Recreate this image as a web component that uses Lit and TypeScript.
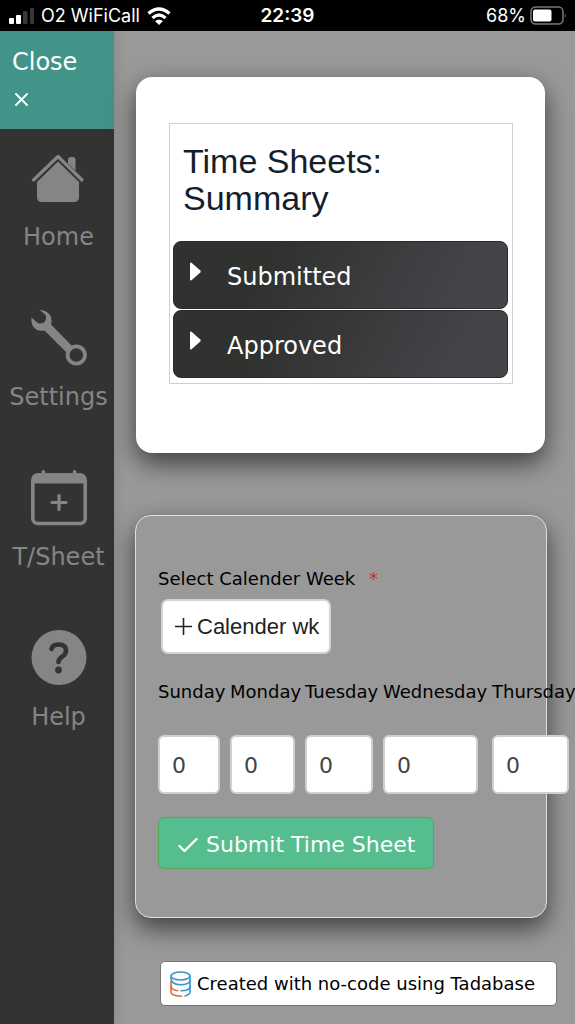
import { LitElement, html, css, svg } from "lit";
import { customElement, state } from "lit/decorators.js";
import { classMap } from "lit/directives/class-map.js";

const homeIcon = svg`
  <path d="M27 11.500 L48 32 V47 Q48 52 43 52 H11 Q6 52 6 47 V32 Z" />
  <path d="M2.500 30 L27 6.500 L51 30" fill="none" stroke="currentColor" stroke-width="3.200" stroke-linecap="round" stroke-linejoin="round" />
  <path d="M37 13.500 V10 Q37 7 40 7 H42 Q44.500 7 44.500 10 V20.500 Z" />
`;

const wrenchIcon = svg`
  <path d="M8.500 0 Q17 0 20 7 Q21.300 11 20 14.500 L41 36 L35 42 L13.500 20.500 Q9 21.500 5 19.500 Q-0.500 15.500 0.500 7.500 L6 12.500 Q8 14 11.500 13 Q14.500 12 15 9 Q15.500 5.500 13 3.500 Z" />
  <circle cx="45.300" cy="45" r="8.700" fill="#333" stroke="currentColor" stroke-width="3.800" />
`;

const calendarIcon = svg`
  <rect x="1.800" y="5" width="52.400" height="48.500" rx="5" fill="none" stroke="currentColor" stroke-width="3.600" />
  <path d="M1 13.500 V9 Q1 3.500 7 3.500 H49 Q55 3.500 55 9 V13.500 Z" />
  <path d="M12.400 1.800 V6 M43.600 1.800 V6" stroke="currentColor" stroke-width="3.600" stroke-linecap="round" />
  <path d="M28 25.500 V39.500 M21 32.500 H35" stroke="currentColor" stroke-width="3.200" stroke-linecap="round" />
`;

const helpIcon = svg`
  <circle cx="28" cy="27.500" r="27.500" />
  <path d="M20.500 19 Q21.500 14.500 27.500 14.500 Q35 14.500 35 20.500 Q35 24 31.500 26.500 Q27.500 29 27.500 32" fill="none" stroke="#333" stroke-width="4.600" stroke-linecap="round" />
  <circle cx="27.500" cy="40" r="3.400" fill="#333" />
`;

const links = [
  { label: "Home", icon: homeIcon },
  { label: "Settings", icon: wrenchIcon },
  { label: "T/Sheet", icon: calendarIcon },
  { label: "Help", icon: helpIcon },
];

@customElement("status-bar")
class StatusBar extends LitElement {
  static styles = css`
    :host {
      display: grid;
      grid-template-columns: 1fr auto 1fr;
      align-items: center;
      height: 31px;
      padding: 0 8px;
      background: #000;
      color: #fff;
      font: 18px/30px Inter, sans-serif;
    }
    .left,
    .right {
      display: flex;
      align-items: center;
      gap: 7px;
    }
    .right {
      justify-content: flex-end;
      gap: 4px;
    }
    .time {
      font-weight: 600;
      font-size: 19px;
    }
    svg {
      display: block;
    }
  `;

  render() {
    return html`
      <div class="left">
        <svg width="26" height="18" viewBox="0 0 26 18" fill="#fff" aria-hidden="true">
          <rect x="1" y="11" width="5" height="6" rx="1" />
          <rect x="8" y="8" width="5" height="9" rx="1" />
          <rect x="15" y="4" width="4.500" height="13" rx="1" fill="#383838" />
          <rect x="22" y="1" width="4" height="16" rx="1" fill="#383838" />
        </svg>
        <span>O2 WiFiCall</span>
        <svg width="24" height="18" viewBox="0 0 24 18" fill="none" stroke="#fff" stroke-width="3.400" aria-hidden="true">
          <path d="M1.500 6.500 Q12 -2.500 22.500 6.500" />
          <path d="M5.500 11 Q12 5 18.500 11" />
          <path d="M12 18 L8 14 Q12 11 16 14 Z" fill="#fff" stroke="none" />
        </svg>
      </div>
      <span class="time">22:39</span>
      <div class="right">
        <span>68%</span>
        <svg width="37" height="19" viewBox="0 0 37 19" aria-hidden="true">
          <rect x="1" y="1" width="32" height="17" rx="4.500" fill="none" stroke="#777" stroke-width="1.500" />
          <rect x="3" y="3.500" width="18.500" height="12" rx="2" fill="#fff" />
          <path d="M34.800 7 Q36.500 9.500 34.800 12 Z" fill="#777" />
        </svg>
      </div>
    `;
  }
}

@customElement("side-menu")
class SideMenu extends LitElement {
  static styles = css`
    :host {
      display: block;
      background: #333;
      color: #858585;
      box-shadow: 0 0 12px rgba(0, 0, 0, 0.15);
      font: 24px/32px Verdana, "DejaVu Sans", sans-serif;
    }
    .close {
      display: flex;
      flex-direction: column;
      gap: 15px;
      width: 100%;
      height: 98px;
      padding: 15px 12px;
      border: 0;
      background: #429488;
      color: #fff;
      font: inherit;
      text-align: left;
      cursor: pointer;
    }
    .cross {
      display: block;
      margin-left: 3px;
    }
    .item {
      display: flex;
      flex-direction: column;
      align-items: center;
      gap: 15px;
      padding: 21px 0 36px;
      color: inherit;
      text-decoration: none;
      white-space: nowrap;
    }
    .item-label,
    .icon {
      display: block;
      margin-left: 3px;
    }
    .icon {
      overflow: visible;
    }
  `;

  render() {
    return html`
      <button class="close" type="button">
        <span>Close</span>
        <svg class="cross" width="13" height="13" viewBox="0 0 13 13" fill="none" stroke="#fff" stroke-width="1.900" stroke-linecap="round" aria-hidden="true">
          <path d="M1 1 L12 12 M12 1 L1 12" />
        </svg>
      </button>
      <nav>
        ${links.map(
          (link) => html`
            <a class="item" href="#">
              <svg class="icon" width="56" height="56" viewBox="0 0 56 56" fill="currentColor" aria-hidden="true">${link.icon}</svg>
              <span class="item-label">${link.label}</span>
            </a>
          `
        )}
      </nav>
    `;
  }
}

@customElement("summary-card")
class SummaryCard extends LitElement {
  static styles = css`
    :host {
      display: block;
      padding: 46px 32px 69px 33px;
      border-radius: 16px;
      background: #fff;
      box-shadow: 0 10px 26px rgba(0, 0, 0, 0.6);
    }
    .panel {
      display: flex;
      flex-direction: column;
      gap: 1px;
      padding: 19px 4px 5px 3px;
      border: 1px solid #d0d0d0;
    }
    .title {
      max-width: 240px;
      margin: 0 0 23px;
      padding-left: 10px;
      color: #141e2d;
      font: 400 34px/37px Arial, "Liberation Sans", sans-serif;
    }
    .row {
      display: flex;
      align-items: center;
      gap: 26px;
      height: 68px;
      padding: 4px 16px 0;
      border: 1px solid #2a2a2b;
      border-radius: 8px;
      background: linear-gradient(120deg, #303230 30%, #464349 85%);
      color: #fff;
      font: 24px/32px Verdana, "DejaVu Sans", sans-serif;
      text-align: left;
      cursor: pointer;
    }
    .arrow {
      margin-bottom: 11px;
    }
  `;

  render() {
    return html`
      <section class="panel">
        <h1 class="title">Time Sheets: Summary</h1>
        ${["Submitted", "Approved"].map(
          (name) => html`
            <button class="row" type="button" aria-expanded="false">
              <svg class="arrow" width="11" height="19" viewBox="0 0 11 19" fill="#fff" aria-hidden="true">
                <path d="M0 1.500 Q0 0 1.500 0.700 L10.300 8.500 Q11 9.500 10.300 10.500 L1.500 18.300 Q0 19 0 17.500 Z" />
              </svg>
              <span>${name}</span>
            </button>
          `
        )}
      </section>
    `;
  }
}

@customElement("time-form")
class TimeForm extends LitElement {
  @state() days = ["Sunday", "Monday", "Tuesday", "Wednesday", "Thursday"];

  static styles = css`
    :host {
      display: block;
      border: 1px solid #dedede;
      border-radius: 16px;
      background: #999;
      box-shadow: 0 10px 26px rgba(0, 0, 0, 0.6);
      color: #000;
      font: 18px/24px Verdana, "DejaVu Sans", sans-serif;
    }
    .form {
      display: flex;
      flex-direction: column;
      align-items: flex-start;
      padding: 51px 22px 48px;
    }
    .required {
      margin-left: 8px;
      color: #d0302c;
    }
    .pick {
      display: flex;
      align-items: center;
      gap: 5px;
      height: 55px;
      margin: 8px 0 26px 3px;
      padding: 0 10px 0 12px;
      border: 2px solid #d3d3d3;
      border-radius: 7px;
      background: #fff;
      color: #222;
      font: 22px/30px Arial, "Liberation Sans", sans-serif;
      white-space: nowrap;
      cursor: pointer;
    }
    .days {
      display: grid;
      grid-template-columns: 62px 65px 68px 99px 77px;
      column-gap: 10px;
      margin-bottom: 23px;
    }
    .day {
      display: flex;
      flex-direction: column;
      gap: 31px;
      min-width: 0;
      white-space: nowrap;
    }
    .wide {
      padding-right: 4px;
    }
    .hours {
      box-sizing: border-box;
      width: 100%;
      height: 59px;
      padding: 2px 12px 0;
      border: 2px solid #d0d0d0;
      border-radius: 6px;
      background: #fff;
      color: #444;
      font: 22px/30px Verdana, "DejaVu Sans", sans-serif;
    }
    .submit {
      display: flex;
      align-items: center;
      gap: 8px;
      height: 52px;
      padding: 3px 18px 0 19px;
      border: 1px solid #55ac55;
      border-radius: 6px;
      background: #56bd8f;
      color: #fff;
      font: 22px/30px Verdana, "DejaVu Sans", sans-serif;
      white-space: nowrap;
      cursor: pointer;
    }
  `;

  render() {
    return html`
      <form class="form" @submit=${(e: Event) => e.preventDefault()}>
        <label for="week">Select Calender Week <span class="required">*</span></label>
        <button class="pick" id="week" type="button">
          <svg width="17" height="17" viewBox="0 0 17 17" stroke="#222" stroke-width="1.600" aria-hidden="true">
            <path d="M8.500 0 V17 M0 8.500 H17" />
          </svg>
          <span>Calender wk</span>
        </button>
        <div class="days">
          ${this.days.map(
            (day) => html`
              <div class=${classMap({ day: true, wide: day === "Wednesday" })}>
                <label for=${day}>${day}</label>
                <input class="hours" id=${day} type="text" inputmode="numeric" value="0" />
              </div>
            `
          )}
        </div>
        <button class="submit" type="submit">
          <svg width="20" height="16" viewBox="0 0 20 16" fill="none" stroke="#fff" stroke-width="2.400" stroke-linecap="round" stroke-linejoin="round" aria-hidden="true">
            <path d="M1.500 9 L6.500 14 L18.500 2" />
          </svg>
          <span>Submit Time Sheet</span>
        </button>
      </form>
    `;
  }
}

@customElement("app-root")
class AppRoot extends LitElement {
  static styles = css`
    :host {
      display: flex;
      flex-direction: column;
      min-height: 100vh;
      overflow: hidden;
      background: #999;
    }
    .body {
      display: flex;
      flex: 1;
    }
    .menu {
      flex: 0 0 114px;
    }
    .main {
      display: flex;
      flex: 1;
      flex-direction: column;
      min-width: 0;
      padding: 46px 28px 18px 21px;
    }
    .summary {
      margin: 0 2px 62px 1px;
    }
    .badge {
      display: flex;
      align-items: center;
      gap: 6px;
      height: 43px;
      margin: 43px -10px 0 25px;
      padding: 0 9px;
      border: 1px solid #777;
      border-radius: 5px;
      background: #fff;
      color: #000;
      font: 18px/24px Verdana, "DejaVu Sans", sans-serif;
      text-decoration: none;
      white-space: nowrap;
    }
  `;

  render() {
    return html`
      <status-bar></status-bar>
      <div class="body">
        <side-menu class="menu"></side-menu>
        <main class="main">
          <summary-card class="summary"></summary-card>
          <time-form></time-form>
          <a class="badge" href="#">
            <svg width="21" height="26" viewBox="0 0 21 26" fill="none" stroke="#3c95cb" stroke-width="1.600" stroke-linecap="round" aria-hidden="true">
              <ellipse cx="10.500" cy="5" rx="9.500" ry="4" />
              <path d="M20 5 V21 Q20 23.500 15 25" />
              <path d="M1 5 V8 Q2 13.500 10.500 13.800 Q19 13.500 20 10" />
              <path d="M11 19.800 Q20 19.500 20 15.500" />
              <path d="M1 10 V21 Q1 25 11.500 25.200" stroke="#df6a34" />
              <path d="M1 15 Q1.500 19 7.500 19.700" stroke="#df6a34" />
            </svg>
            <span>Created with no-code using Tadabase</span>
          </a>
        </main>
      </div>
    `;
  }
}
